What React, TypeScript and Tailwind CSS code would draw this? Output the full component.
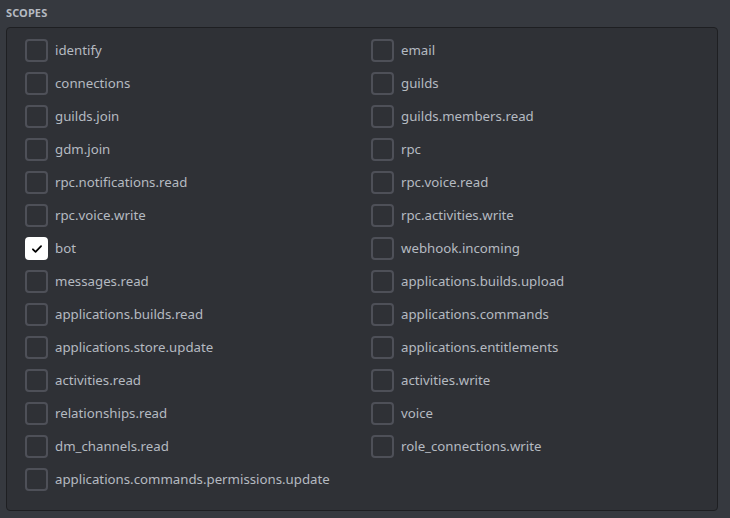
import React from "react";

const left = [
  "identify",
  "connections",
  "guilds.join",
  "gdm.join",
  "rpc.notifications.read",
  "rpc.voice.write",
  "bot",
  "messages.read",
  "applications.builds.read",
  "applications.store.update",
  "activities.read",
  "relationships.read",
  "dm_channels.read",
  "applications.commands.permissions.update",
];
const right = [
  "email",
  "guilds",
  "guilds.members.read",
  "rpc",
  "rpc.voice.read",
  "rpc.activities.write",
  "webhook.incoming",
  "applications.builds.upload",
  "applications.commands",
  "applications.entitlements",
  "activities.write",
  "voice",
  "role_connections.write",
];

function Item({ label, checked }: { label: string; checked?: boolean }) {
  return (
    <div className="flex h-[33px] items-center gap-[7px]">
      {checked ? (
        <div className="flex h-[23px] w-[23px] items-center justify-center rounded-[4px] border-2 border-white bg-white">
          <svg width="14" height="14" viewBox="0 0 24 24" fill="none" stroke="#000" strokeWidth="3" strokeLinecap="round" strokeLinejoin="round">
            <path d="M5 12.5l4.5 4.5L19 7" />
          </svg>
        </div>
      ) : (
        <div className="h-[23px] w-[23px] rounded-[4px] border-2 border-[#4e5058]" />
      )}
      <span className="text-[13.25px] text-[#b5bac1]">{label}</span>
    </div>
  );
}

export default function App() {
  const items: { label: string; checked?: boolean }[] = [];
  for (let i = 0; i < left.length; i++) {
    items.push({ label: left[i], checked: left[i] === "bot" });
    if (right[i]) items.push({ label: right[i] });
  }
  return (
    <div
      className="h-[518px] w-[730px] bg-[#36393f] px-[6px] pt-[6px]"
      style={{ fontFamily: '"Noto Sans", "Open Sans", sans-serif' }}
    >
      <div className="mb-[7px] h-[14px] text-[11px] font-bold uppercase leading-[14px] tracking-[0.01em] text-[#b5bac1]">
        Scopes
      </div>
      <div className="h-[484px] w-[712px] rounded-[4px] border border-[#1e1f22] bg-[#2f3136] pl-[18px] pr-[18px] pt-[6px]">
        <div className="grid grid-cols-2 gap-x-[18px]">
          {items.map((it) => (
            <Item key={it.label} label={it.label} checked={it.checked} />
          ))}
        </div>
      </div>
    </div>
  );
}
